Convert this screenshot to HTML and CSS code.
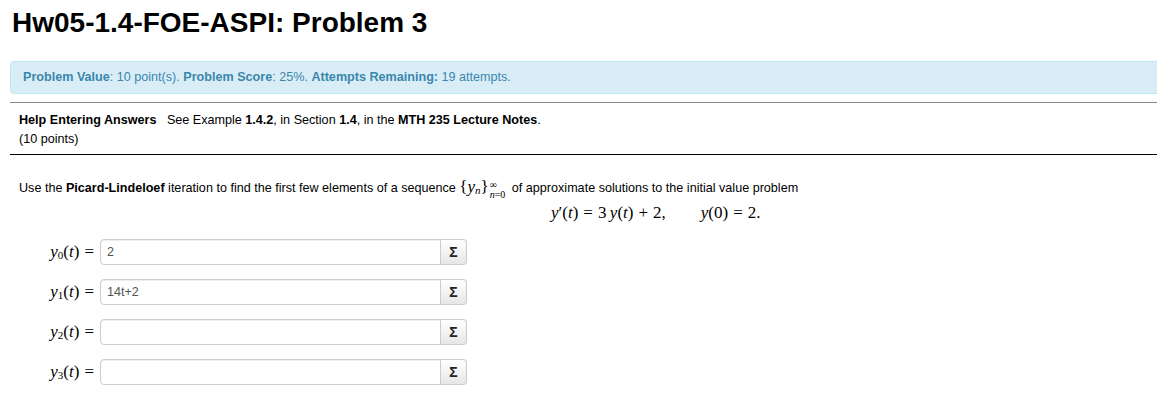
FILE: index.html
```html
<!DOCTYPE html>
<html>
<head>
<meta charset="utf-8">
<link rel="stylesheet" href="styles.css">
</head>
<body>
<h1 class="title">Hw05-1.4-FOE-ASPI: Problem 3</h1>
<div class="page">
  <div class="alert">
    <b>Problem Value</b>: 10 point(s). <b>Problem Score</b>: 25%. <b>Attempts Remaining:</b> 19 attempts.
  </div>
  <div class="help">
    <div><b>Help Entering Answers</b>&nbsp;&nbsp; See Example <b>1.4.2</b>, in Section <b>1.4</b>, in the <b>MTH 235 Lecture Notes</b>.</div>
    <div>(10 points)</div>
  </div>
  <div class="problem">
    <p class="intro">Use the <b>Picard-Lindeloef</b> iteration to find the first few elements of a sequence <span class="m">{<i>y</i><sub class="sn"><i>n</i></sub>}<span class="supsub"><span class="sup">∞</span><span class="sub"><i>n</i>=0</span></span></span> of approximate solutions to the initial value problem</p>
    <div class="display"><span class="m"><i>y</i>′(<i>t</i>)<span class="op">=</span>3&thinsp;<i>y</i>(<i>t</i>)<span class="op">+</span>2,</span><span class="m gap"><i>y</i>(0)<span class="op">=</span>2.</span></div>
    <div class="rows">
      <div class="row"><span class="lbl"><i>y</i><sub>0</sub>(<i>t</i>)<span class="op">=</span></span><div class="field"><span class="inp">2</span><span class="btn">Σ</span></div></div>
      <div class="row"><span class="lbl"><i>y</i><sub>1</sub>(<i>t</i>)<span class="op">=</span></span><div class="field"><span class="inp">14t+2</span><span class="btn">Σ</span></div></div>
      <div class="row"><span class="lbl"><i>y</i><sub>2</sub>(<i>t</i>)<span class="op">=</span></span><div class="field"><span class="inp"></span><span class="btn">Σ</span></div></div>
      <div class="row"><span class="lbl"><i>y</i><sub>3</sub>(<i>t</i>)<span class="op">=</span></span><div class="field"><span class="inp"></span><span class="btn">Σ</span></div></div>
    </div>
  </div>
</div>
</body>
</html>
```
FILE: styles.css
```css
html, body { margin: 0; padding: 0; background: #fff; }
body { font-family: "Liberation Sans", Arial, sans-serif; font-size: 12.6px; color: #333; overflow: hidden; }
.title { margin: 0; padding: 8px 0 0 12px; font-size: 28px; line-height: 30px; font-weight: bold; color: #000; }
.page { margin-left: 10px; width: 1200px; }
.alert { margin-top: 23px; height: 31px; line-height: 31px; padding-left: 12px; background: #d9edf7; border: 1px solid #bce8f1; border-radius: 4px; color: #3a87ad; }
.alert b { color: #3a87ad; }
.help { margin-top: 8px; border-top: 1px solid #888; border-bottom: 1px solid #000; padding: 8px 0 5px 9px; line-height: 19px; color: #000; }
.problem { padding-left: 9px; color: #000; }
.intro { margin: 22px 0 0; line-height: 20px; height: 20px; }
.m { font-family: "Liberation Serif", "Times New Roman", serif; font-size: 17px; }
.m i { font-style: italic; }
.sn { font-size: 11px; line-height: 0; vertical-align: -2px; }
.supsub { display: inline-block; vertical-align: -6px; line-height: 10px; font-size: 10px; margin-left: 1px; margin-right: 3px; }
.supsub .sup, .supsub .sub { display: block; }
.op { margin: 0 5px; font-style: normal; }
.display { margin-top: 6px; padding-left: 532px; line-height: 20px; height: 20px; }
.gap { margin-left: 35px; }
.rows { margin-top: 16px; display: flex; flex-direction: column; gap: 14px; }
.row { display: flex; align-items: center; height: 26px; }
.lbl { width: 81px; text-align: right; font-family: "Liberation Serif", "Times New Roman", serif; font-size: 17px; white-space: nowrap; }
.lbl .op { margin-right: 6px; }
.lbl sub { font-size: 11px; line-height: 0; vertical-align: -2px; }
.field { display: flex; height: 26px; }
.inp { box-sizing: border-box; width: 341px; height: 26px; border: 1px solid #ccc; border-radius: 4px 0 0 4px; padding: 0 6px; line-height: 24px; color: #555; box-shadow: inset 0 1px 1px rgba(0,0,0,0.075); }
.btn { box-sizing: border-box; width: 26px; height: 26px; border: 1px solid #ccc; border-left: none; border-radius: 0 4px 4px 0; background: linear-gradient(#fff, #e6e6e6); text-align: center; line-height: 24px; font-weight: bold; font-size: 14px; color: #222; }
```
